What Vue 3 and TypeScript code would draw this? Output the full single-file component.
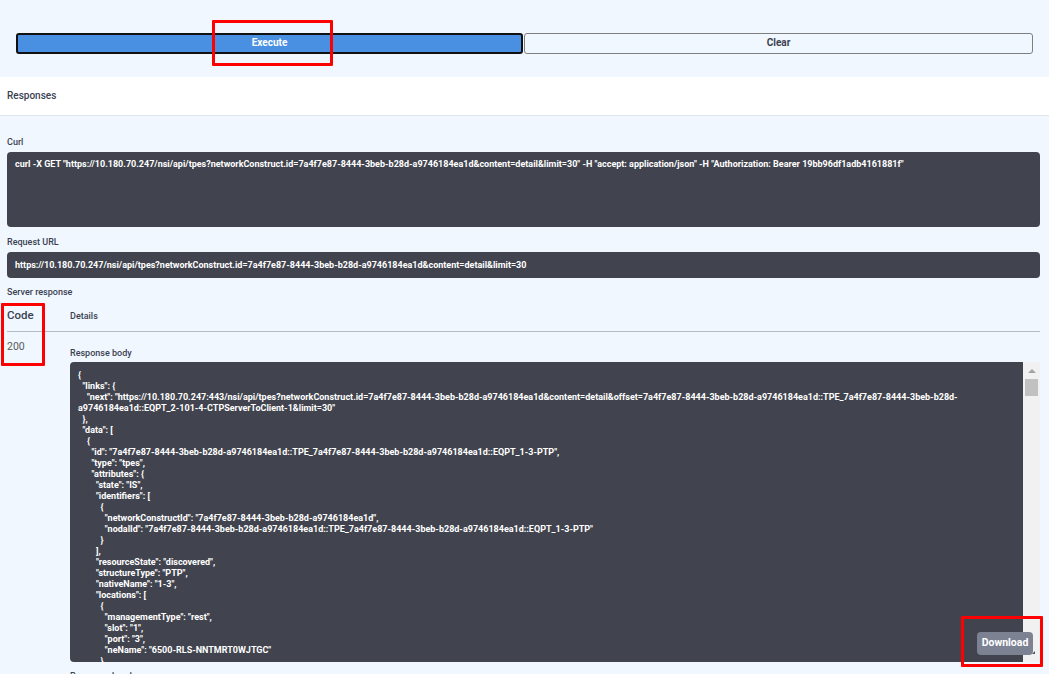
<script setup lang="ts">
const body = `{
  "links": {
    "next": "https://10.180.70.247:443/nsi/api/tpes?networkConstruct.id=7a4f7e87-8444-3beb-b28d-a9746184ea1d&content=detail&offset=7a4f7e87-8444-3beb-b28d-a9746184ea1d::TPE_7a4f7e87-8444-3beb-b28d-a9746184ea1d::EQPT_2-101-4-CTPServerToClient-1&limit=30"
  },
  "data": [
    {
      "id": "7a4f7e87-8444-3beb-b28d-a9746184ea1d::TPE_7a4f7e87-8444-3beb-b28d-a9746184ea1d::EQPT_1-3-PTP",
      "type": "tpes",
      "attributes": {
        "state": "IS",
        "identifiers": [
          {
            "networkConstructId": "7a4f7e87-8444-3beb-b28d-a9746184ea1d",
            "nodalId": "7a4f7e87-8444-3beb-b28d-a9746184ea1d::TPE_7a4f7e87-8444-3beb-b28d-a9746184ea1d::EQPT_1-3-PTP"
          }
        ],
        "resourceState": "discovered",
        "structureType": "PTP",
        "nativeName": "1-3",
        "locations": [
          {
            "managementType": "rest",
            "slot": "1",
            "port": "3",
            "neName": "6500-RLS-NNTMRT0WJTGC"
          }
        ]
      }
    }
  ]
}`
const curl = 'curl -X GET "https://10.180.70.247/nsi/api/tpes?networkConstruct.id=7a4f7e87-8444-3beb-b28d-a9746184ea1d&content=detail&limit=30" -H "accept: application/json" -H "Authorization: Bearer 19bb96df1adb4161881f"'
const url = 'https://10.180.70.247/nsi/api/tpes?networkConstruct.id=7a4f7e87-8444-3beb-b28d-a9746184ea1d&content=detail&limit=30'
</script>

<template>
  <div class="page">
    <div class="actions">
      <button class="btn execute">Execute</button>
      <button class="btn clear">Clear</button>
    </div>
    <div class="band"><h4>Responses</h4></div>
    <div class="content">
      <div class="label curl-label">Curl</div>
      <pre class="dark curl">{{ curl }}</pre>
      <div class="label url-label">Request URL</div>
      <pre class="dark url">{{ url }}</pre>
      <div class="label server-label">Server response</div>
      <div class="table">
        <div class="head">
          <div class="col-code">Code</div>
          <div class="col-details">Details</div>
        </div>
        <div class="row">
          <div class="code">200</div>
          <div class="details">
            <div class="label body-label">Response body</div>
            <div class="body-wrap">
              <pre class="dark body">{{ body }}</pre>
              <div class="scrollbar">
                <span class="arrow"></span>
                <span class="thumb"></span>
                <span class="grip"></span>
              </div>
              <button class="download">Download</button>
            </div>
            <div class="label headers-label">Response headers</div>
          </div>
        </div>
      </div>
    </div>
    <span class="mark m1"></span>
    <span class="mark m2"></span>
    <span class="mark m3"></span>
  </div>
</template>

<style>
html, body { margin: 0; background: #f0f7ff; overflow: hidden; }
</style>

<style scoped>
.page {
  position: relative;
  width: 1049px;
  height: 674px;
  overflow: hidden;
  background: #f0f7ff;
  font-family: Roboto, sans-serif;
  color: #3b4151;
}
.actions {
  display: flex;
  padding: 33px 16px 23px 16px;
  gap: 1px;
}
.btn {
  height: 21px;
  box-sizing: border-box;
  border-radius: 3px;
  font: 700 10px Roboto, sans-serif;
  padding: 0 0 2px;
}
.execute {
  width: 507px;
  background: #4a90e2;
  color: #fff;
  border: 2px solid #111;
}
.clear {
  width: 509px;
  background: #f0f7ff;
  color: #3b4151;
  border: 1px solid #7f7f7f;
}
.band {
  background: #fff;
  height: 39px;
  box-sizing: border-box;
  border-bottom: 1px solid #dfe5ec;
  padding: 0 7px 2px;
  display: flex;
  align-items: center;
}
.band h4 {
  margin: 0;
  font-size: 10px;
  font-weight: 500;
}
.content { padding: 0 9px 0 7px; }
.label {
  font-size: 9px;
  font-weight: 500;
  line-height: 12px;
}
.curl-label { padding-top: 20px; height: 12px; margin-bottom: 4px; }
.dark {
  margin: 0;
  background: #41444e;
  color: #fff;
  border-radius: 4px;
  font: 700 9px/11px Roboto, sans-serif;
  box-sizing: border-box;
  white-space: pre-wrap;
  overflow-wrap: anywhere;
}
.curl { height: 75px; padding: 7px 8px; }
.url-label { margin-top: 9px; margin-bottom: 4px; }
.url { height: 26px; padding: 8px 8px; }
.server-label { margin-top: 8px; }
.table { margin-top: 9px; }
.head {
  display: flex;
  align-items: center;
  height: 16px;
  padding-bottom: 8px;
  border-bottom: 1px solid #b6bbc1;
}
.col-code { width: 63px; font-size: 11.5px; font-weight: 500; }
.col-details { font-size: 9px; font-weight: 500; padding-top: 2px; }
.row { display: flex; }
.code { width: 63px; font-size: 10.5px; color: #5a5a5a; padding-top: 8px; line-height: 14px; }
.details { flex: 1; min-width: 0; }
.body-label { margin-top: 15px; margin-bottom: 3px; }
.body-wrap { position: relative; display: flex; height: 300px; }
.body {
  flex: 1;
  min-width: 0;
  padding: 7.5px 8px;
  overflow: hidden;
  border-radius: 4px 0 0 4px;
}
.scrollbar {
  width: 17px;
  background: #f1f1f1;
  position: relative;
  flex: none;
}
.arrow {
  position: absolute;
  left: 5px;
  top: 7px;
  border: 4px solid transparent;
  border-top: 0;
  border-bottom: 4px solid #a3a3a3;
}
.thumb {
  position: absolute;
  left: 2px;
  top: 17px;
  width: 13px;
  height: 17px;
  background: #c1c1c1;
}
.grip {
  position: absolute;
  right: 5px;
  bottom: 8px;
  width: 0;
  height: 0;
  border-left: 3px solid transparent;
  border-bottom: 3px solid #555;
}
.download {
  position: absolute;
  right: 7px;
  bottom: 7px;
  width: 56px;
  height: 23px;
  border: 0;
  border-radius: 4px;
  background: #7d8293;
  color: #fff;
  font: 700 10.5px Roboto, sans-serif;
  padding: 0 0 2px;
}
.headers-label { margin-top: 8px; }
.mark {
  position: absolute;
  box-sizing: border-box;
  border: 3px solid #ff0000;
  border-radius: 1px;
}
.m1 { left: 212px; top: 20px; width: 121px; height: 46px; }
.m2 { left: 1px; top: 303px; width: 44px; height: 63px; }
.m3 { left: 961px; top: 616px; width: 82px; height: 51px; }
</style>
